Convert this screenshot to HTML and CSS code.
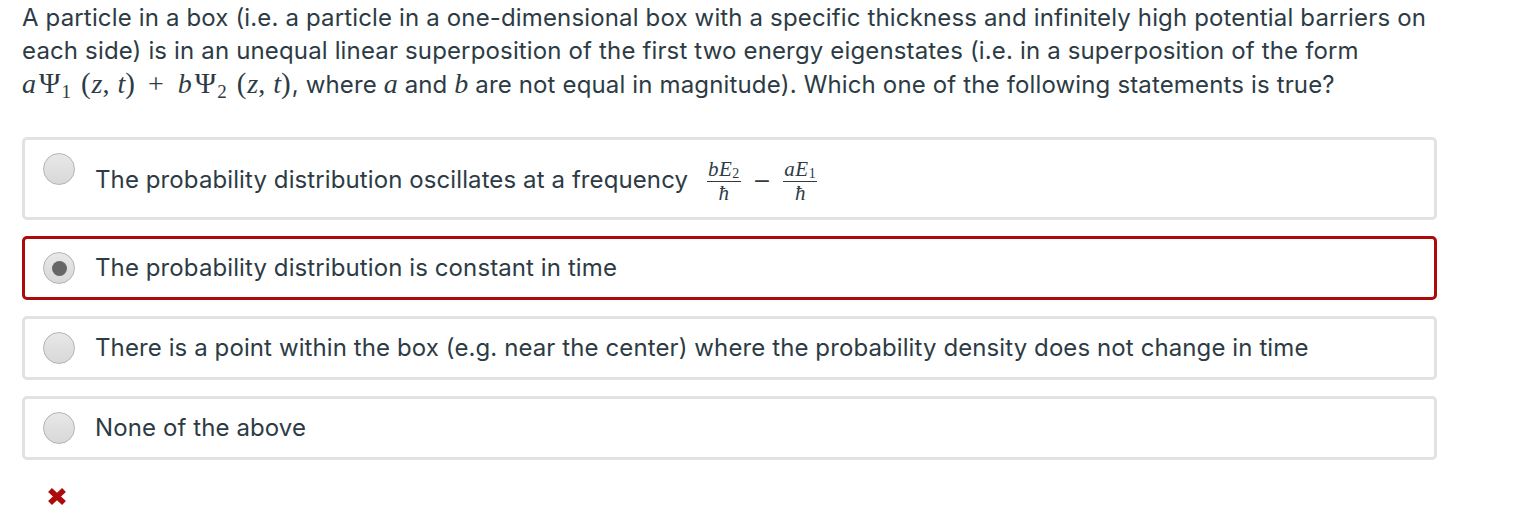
FILE: index.html
```html
<!DOCTYPE html>
<html>
<head>
<meta charset="utf-8">
<link rel="stylesheet" href="styles.css">
</head>
<body>
<div class="quiz">
  <p class="question">A particle in a box (i.e. a particle in a one-dimensional box with a specific thickness and infinitely high potential barriers on each side) is in an unequal linear superposition of the first two energy eigenstates (i.e. in a superposition of the form <span class="math"><i>a</i><span class="psi">Ψ</span><sub>1</sub><span class="par">(</span><i>z</i><span class="comma">,</span><i>t</i><span class="par">)</span><span class="op">+</span><i>b</i><span class="psi">Ψ</span><sub>2</sub><span class="par">(</span><i>z</i><span class="comma">,</span><i>t</i><span class="par">)</span></span>, where <span class="math"><i>a</i></span> and <span class="math"><i>b</i></span> are not equal in magnitude). Which one of the following statements is true?</p>

  <div class="answers">
    <label class="answer tall">
      <span class="radio"></span>
      <span class="text">The probability distribution oscillates at a frequency <span class="frac"><span class="num"><i>bE</i><sub>2</sub></span><span class="den">ħ</span></span><span class="minus">−</span><span class="frac"><span class="num"><i>aE</i><sub>1</sub></span><span class="den">ħ</span></span></span>
    </label>
    <label class="answer selected">
      <span class="radio checked"></span>
      <span class="text">The probability distribution is constant in time</span>
    </label>
    <label class="answer">
      <span class="radio"></span>
      <span class="text">There is a point within the box (e.g. near the center) where the probability density does not change in time</span>
    </label>
    <label class="answer">
      <span class="radio"></span>
      <span class="text">None of the above</span>
    </label>
  </div>

  <div class="result">
    <svg width="20" height="19" viewBox="0 0 20 19"><path d="M3 3 L17 16 M17 3 L3 16" stroke="#ae0a0a" stroke-width="5.6" stroke-linecap="butt" fill="none"/></svg>
  </div>
</div>
</body>
</html>
```

FILE: styles.css
```css
html, body {
  margin: 0;
  padding: 0;
  background: #ffffff;
}
body {
  font-family: Inter, "Noto Sans", sans-serif;
  color: #2d3b45;
}
.quiz {
  padding: 0 94px 0 22px;
}
.question {
  margin: 0;
  padding-top: 1px;
  font-size: 24px;
  line-height: 33px;
  letter-spacing: 0.15px;
}
.math {
  font-family: "Liberation Serif", "DejaVu Serif", serif;
  font-size: 28px;
  white-space: nowrap;
  letter-spacing: 0;
}
.math i {
  font-style: italic;
}
.math .psi {
  margin-left: 3px;
  font-size: 29px;
}
.math sub {
  font-size: 19px;
  vertical-align: -5px;
  line-height: 0;
  margin-left: 1px;
  margin-right: 10px;
}
.math .par {
  font-size: 29px;
  margin-right: 1px;
}
.math .comma {
  margin-right: 8px;
}
.math .op {
  margin: 0 14px 0 12px;
}
.answers {
  display: flex;
  flex-direction: column;
  gap: 16px;
  margin-top: 36px;
}
.answer {
  display: flex;
  align-items: flex-start;
  gap: 20px;
  border: 3px solid #e2e2e2;
  border-radius: 5px;
  padding: 13px 18px;
}
.answer.tall {
  padding-bottom: 13px;
}
.answer.selected {
  border-color: #ae0a0a;
}
.radio {
  flex: none;
  width: 32px;
  height: 32px;
  box-sizing: border-box;
  border-radius: 50%;
  border: 1px solid #b4b4b4;
  background: linear-gradient(#e8e8e8, #d8d8d8);
  display: flex;
  align-items: center;
  justify-content: center;
}
.radio.checked::after {
  content: "";
  width: 15px;
  height: 15px;
  border-radius: 50%;
  background: #666666;
}
.text {
  font-size: 24px;
  line-height: 32px;
  letter-spacing: 0.1px;
}
.tall .text {
  margin-top: 5px;
}
.frac {
  display: inline-flex;
  flex-direction: column;
  align-items: center;
  vertical-align: middle;
  font-family: "Liberation Serif", "DejaVu Serif", serif;
  margin: 0 0 0 12px;
}
.minus + .frac {
  margin-left: 0;
}
.frac .num {
  font-size: 21px;
  line-height: 23px;
  padding: 0 1px;
  letter-spacing: 0.5px;
  border-bottom: 1px solid #2d3b45;
}
.frac .num sub {
  font-size: 14px;
  vertical-align: -2px;
  line-height: 0;
}
.frac .den {
  font-size: 21px;
  line-height: 22px;
  font-style: italic;
}
.minus {
  font-family: "DejaVu Sans", sans-serif;
  font-size: 22px;
  margin: 0 12px 0 12px;
}
.result {
  padding: 27px 0 0 25px;
}
.result svg {
  display: block;
}
```
